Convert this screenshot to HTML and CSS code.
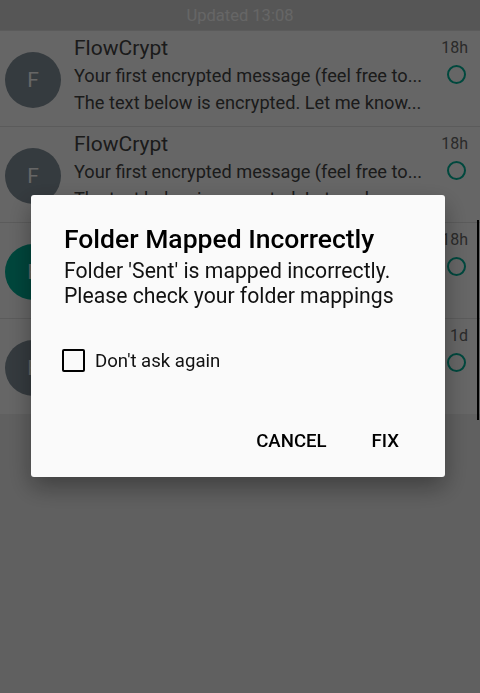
FILE: index.html
```html
<!DOCTYPE html>
<html lang="en">
  <head>
    <title>Inbox</title>
    <meta charset="UTF-8" />
    <meta name="viewport" content="width=device-width, initial-scale=1" />
    <link rel="stylesheet" href="styles.css">
  </head>
  <body>
    <div class="inbox">
      <div class="updated">Updated 13:08</div>

      <div class="msg">
        <div class="avatar">F</div>
        <div class="msgBody">
          <div class="sender">FlowCrypt</div>
          <div class="line">Your first encrypted message (feel free to...</div>
          <div class="line">The text below is encrypted. Let me know...</div>
        </div>
        <div class="meta">
          <span class="time">18h</span>
          <span class="ring"></span>
        </div>
      </div>

      <div class="msg">
        <div class="avatar">F</div>
        <div class="msgBody">
          <div class="sender">FlowCrypt</div>
          <div class="line">Your first encrypted message (feel free to...</div>
          <div class="line">The text below is encrypted. Let me know...</div>
        </div>
        <div class="meta">
          <span class="time">18h</span>
          <span class="ring"></span>
        </div>
      </div>

      <div class="msg">
        <div class="avatar teal">F</div>
        <div class="msgBody">
          <div class="sender">FlowCrypt</div>
          <div class="line">Your first encrypted message (feel free to...</div>
          <div class="line">The text below is encrypted. Let me know...</div>
        </div>
        <div class="meta">
          <span class="time">18h</span>
          <span class="ring"></span>
        </div>
      </div>

      <div class="msg">
        <div class="avatar">F</div>
        <div class="msgBody">
          <div class="sender">FlowCrypt</div>
          <div class="line">Your first encrypted message (feel free to...</div>
          <div class="line">The text below is encrypted. Let me know...</div>
        </div>
        <div class="meta">
          <span class="time">1d</span>
          <span class="ring"></span>
        </div>
      </div>
    </div>

    <div class="scrollThumb"></div>

    <!-- dialog -->
    <div class="dim">
      <div class="dialog">
        <div class="title">Folder Mapped Incorrectly</div>
        <div class="text">Folder 'Sent' is mapped incorrectly.<br />Please check your folder mappings</div>
        <label class="check">
          <span class="box"></span>
          <span>Don't ask again</span>
        </label>
        <div class="actions">
          <button class="btn">Cancel</button>
          <button class="btn">Fix</button>
        </div>
      </div>
    </div>
  </body>
</html>
```

FILE: styles.css
```css
body {
  padding: 0;
  margin: 0;
  height: 693px;
  overflow: hidden;
  background-color: #efefef;
  font-family: Roboto, "Liberation Sans", sans-serif;
}
.updated {
  height: 30px;
  line-height: 31px;
  text-align: center;
  font-size: 16.5px;
  color: #ffffff;
  background-color: #d6d6d6;
}
.msg {
  display: flex;
  height: 96px;
  background-color: #fff;
  border-top: 1px solid #e4e4e4;
  box-sizing: border-box;
}
.avatar {
  flex-shrink: 0;
  width: 56px;
  height: 56px;
  margin: 21px 13px 0 5px;
  border-radius: 50%;
  background-color: #85939d;
  color: #fff;
  font-size: 21px;
  line-height: 56px;
  text-align: center;
}
.avatar.teal {
  background-color: #00af96;
}
.msgBody {
  flex: 1;
  min-width: 0;
  padding-top: 4px;
  color: #454545;
}
.sender {
  font-size: 21px;
  line-height: 27px;
}
.line {
  font-size: 18.2px;
  line-height: 27px;
  white-space: nowrap;
}
.meta {
  flex-shrink: 0;
  display: flex;
  flex-direction: column;
  align-items: flex-end;
  width: 40px;
  padding: 7px 12px 0 0;
  color: #6a6a6a;
}
.time {
  font-size: 16px;
  line-height: 20px;
}
.ring {
  width: 15px;
  height: 15px;
  margin: 7px 2px 0 0;
  border: 2px solid #00b39a;
  border-radius: 50%;
}
.scrollThumb {
  position: absolute;
  right: 1px;
  top: 220px;
  width: 2px;
  height: 200px;
  background-color: #000;
}
.dim {
  position: fixed;
  top: 0;
  left: 0;
  right: 0;
  bottom: 0;
  background-color: rgba(0, 0, 0, 0.6);
  padding-top: 195px;
}
.dialog {
  width: 414px;
  margin-left: 31px;
  box-sizing: border-box;
  padding: 29px 0 0 33px;
  height: 282px;
  background-color: #fafafa;
  border-radius: 3px;
  box-shadow: 0 10px 24px rgba(0, 0, 0, 0.35);
  color: #000;
}
.title {
  font-size: 26.5px;
  font-weight: 500;
  line-height: 30px;
}
.text {
  margin-top: 4px;
  font-size: 21.2px;
  line-height: 25px;
  color: #111;
}
.check {
  display: flex;
  align-items: center;
  margin-top: 41px;
  font-size: 18.6px;
  color: #111;
}
.box {
  width: 19px;
  height: 19px;
  margin: 0 10px 0 -2px;
  border: 2px solid #000;
  border-radius: 2px;
}
.actions {
  display: flex;
  justify-content: flex-end;
  gap: 13px;
  margin-top: 50px;
  padding-right: 30px;
}
.btn {
  border: none;
  background: none;
  padding: 8px 16px;
  font-family: Roboto, "Liberation Sans", sans-serif;
  font-size: 18.6px;
  font-weight: 500;
  text-transform: uppercase;
  color: #000;
}
```
